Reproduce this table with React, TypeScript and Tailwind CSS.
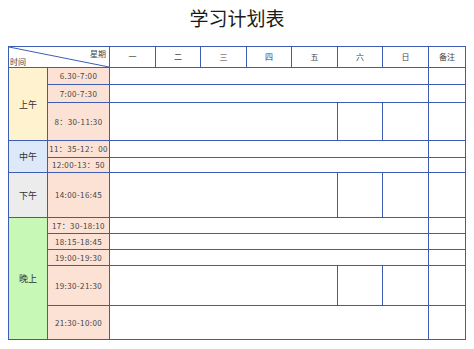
const days = ["一", "二", "三", "四", "五", "六", "日"];
const colWidths = [39, 62, 46, 45, 46, 45, 46, 45, 46, 37];

type Slot = { time: string; h: number; split?: boolean };
type Period = { name: string; bg: string; slots: Slot[] };

const periods: Period[] = [
  {
    name: "上午",
    bg: "bg-[#fff2cf]",
    slots: [
      { time: "6.30-7:00", h: 17 },
      { time: "7:00-7:30", h: 18 },
      { time: "8：30-11:30", h: 38, split: true },
    ],
  },
  {
    name: "中午",
    bg: "bg-[#dde8f8]",
    slots: [
      { time: "11：35-12：00", h: 17 },
      { time: "12:00-13：50", h: 15 },
    ],
  },
  {
    name: "下午",
    bg: "bg-[#ececec]",
    slots: [{ time: "14:00-16:45", h: 45, split: true }],
  },
  {
    name: "晚上",
    bg: "bg-[#c8f8b6]",
    slots: [
      { time: "17：30-18:10", h: 16 },
      { time: "18:15-18:45", h: 16 },
      { time: "19:00-19:30", h: 16 },
      { time: "19:30-21:30", h: 40, split: true },
      { time: "21:30-10:00", h: 34 },
    ],
  },
];

const cell = "border border-[#3d5db5] p-0";

export default function App() {
  return (
    <div className="w-[474px] h-[349px] bg-white font-['Noto_Sans_CJK_SC','Noto_Sans',sans-serif] text-[#444]">
      <h1 className="pt-[7px] h-[46px] text-center text-[19px] leading-[22px] font-normal text-[#1a1a1a]">学习计划表</h1>
      <table className="ml-[8px] w-[458px] table-fixed border-collapse text-[8px] leading-none">
        <colgroup>
          {colWidths.map((w, i) => (
            <col key={i} style={{ width: w }} />
          ))}
        </colgroup>
        <tbody>
          <tr className="h-[21px]">
            <td colSpan={2} className={`${cell} relative`}>
              <svg className="absolute inset-0 w-full h-full" viewBox="0 0 100 20" preserveAspectRatio="none">
                <line x1="0" y1="0" x2="100" y2="20" stroke="#3d5db5" strokeWidth="1" vectorEffect="non-scaling-stroke" />
              </svg>
              <span className="absolute right-[3px] top-[3px]">星期</span>
              <span className="absolute left-[1px] bottom-[1px]">时间</span>
            </td>
            {days.map((d) => (
              <td key={d} className={`${cell} text-center`}>{d}</td>
            ))}
            <td className={`${cell} text-center`}>备注</td>
          </tr>
          {periods.map((p) =>
            p.slots.map((s, i) => (
              <tr key={s.time} style={{ height: s.h }}>
                {i === 0 && (
                  <td rowSpan={p.slots.length} className={`${cell} ${p.bg} text-center text-[9px] text-[#333]`}>
                    {p.name}
                  </td>
                )}
                <td className={`${cell} bg-[#fce2d5] text-center tracking-[0.4px]`}>{s.time}</td>
                {s.split ? (
                  <>
                    <td colSpan={5} className={cell} />
                    <td className={cell} />
                    <td className={cell} />
                  </>
                ) : (
                  <td colSpan={7} className={cell} />
                )}
                <td className={cell} />
              </tr>
            ))
          )}
        </tbody>
      </table>
    </div>
  );
}
